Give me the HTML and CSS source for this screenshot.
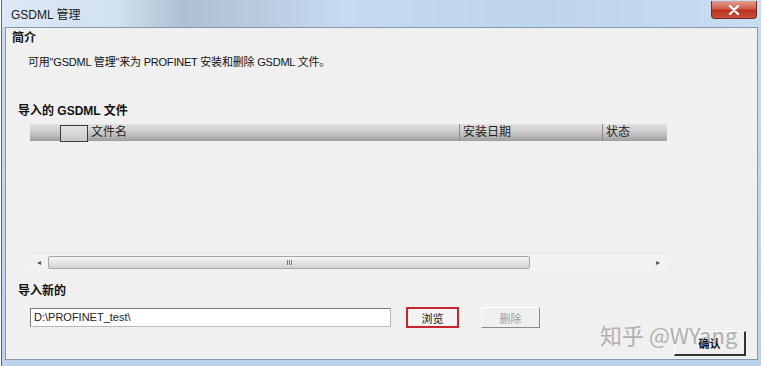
FILE: index.html
```html
<!DOCTYPE html>
<html lang="zh-CN">
<head>
  <meta charset="UTF-8">
  <title>GSDML 管理</title>
  <link rel="stylesheet" href="styles.css">
</head>
<body>
  <div class="window">
    <div class="titlebar">
      <span class="title">GSDML 管理</span>
      <div class="close">
        <svg width="14" height="10" viewBox="0 0 14 10">
          <path d="M3 1 L11 9 M11 1 L3 9" stroke="#fff" stroke-width="2.4" stroke-linecap="round"/>
        </svg>
      </div>
    </div>

    <div class="content">
      <div class="group-title">简介</div>
      <p class="intro">可用"GSDML 管理"来为 PROFINET 安装和删除 GSDML 文件。</p>

      <div class="section-title">导入的 GSDML 文件</div>
      <div class="list">
        <div class="list-header">
          <div class="hcell blank"></div>
          <div class="hcell check"><span class="box"></span></div>
          <div class="hcell name">文件名</div>
          <div class="hcell date">安装日期</div>
          <div class="hcell status">状态</div>
        </div>
        <div class="list-body"></div>
        <div class="hscroll">
          <span class="arrow">&#9666;</span>
          <div class="thumb">
            <span class="grip"></span><span class="grip"></span><span class="grip"></span>
          </div>
          <div class="track"></div>
          <span class="arrow">&#9656;</span>
        </div>
      </div>

      <div class="section-title new">导入新的</div>
      <div class="import-row">
        <div class="path-input">D:\PROFINET_test\</div>
        <div class="highlight"><button class="btn browse">浏览</button></div>
        <button class="btn disabled">删除</button>
      </div>

      <div class="footer">
        <button class="btn ok">确认</button>
      </div>
    </div>

    <div class="watermark">知乎 @WYang</div>
  </div>
</body>
</html>
```

FILE: styles.css
```css
body {
  margin: 0;
  background-color: #fff;
  font-family: "Liberation Sans", "Noto Sans CJK SC", sans-serif;
  font-size: 11px;
  color: #111;
}
.window {
  position: relative;
  width: 760px;
  height: 366px;
  margin-left: 1px;
  box-sizing: border-box;
  border-left: 1px solid #5a6878;
  padding: 0 3px 6px 3px;
  background: linear-gradient(180deg, #c9dcef 0%, #bcd3ea 100%);
}
.titlebar {
  height: 27px;
  display: flex;
  align-items: center;
  justify-content: space-between;
  margin: 0 -3px;
  padding: 0 4px 0 9px;
  background: linear-gradient(90deg, #dce8f4 0%, #d2e1f0 15%, #aebfd2 24%, #b8cadc 33%, #c6dbef 45%, #bcd4ec 70%, #c9ddf1 100%);
}
.title {
  font-size: 12px;
  color: #1a1a1a;
}
.close {
  align-self: flex-start;
  width: 44px;
  height: 17px;
  margin-top: 1px;
  display: flex;
  align-items: center;
  justify-content: center;
  border: 1px solid #6e2a22;
  border-top: none;
  border-radius: 0 0 4px 4px;
  background: linear-gradient(180deg, #e0a092 0%, #cf5c4a 45%, #b8321f 55%, #c8503c 100%);
}
.content {
  height: 333px;
  box-sizing: border-box;
  border: 1px solid #8497ad;
  background-color: #f0f0f0;
  padding: 3px 6px 0 6px;
}
.group-title, .section-title {
  font-size: 12px;
  font-weight: bold;
  line-height: 14px;
}
.intro {
  margin: 10px 0 0 16px;
  line-height: 14px;
  letter-spacing: -0.2px;
}
.section-title {
  margin: 35px 0 0 6px;
}
.list {
  margin: 6px 0 0 18px;
  width: 637px;
}
.list-header {
  display: flex;
  height: 17px;
  background: linear-gradient(180deg, #e2e2e2 0%, #cfcfcf 40%, #b4b4b4 75%, #9e9e9e 100%);
}
.hcell {
  box-sizing: border-box;
  height: 17px;
  line-height: 17px;
  padding-left: 3px;
  font-size: 12px;
  color: #222;
}
.blank { width: 30px; padding: 0; }
.check { width: 28px; padding: 1px 0 0 0; }
.check .box {
  display: block;
  width: 26px;
  height: 15px;
  border: 1px solid #3c3c3c;
  background: linear-gradient(180deg, #e4e4e4 0%, #c8c8c8 100%);
}
.name { width: 371px; }
.date { width: 143px; border-left: 1px solid #8a8a8a; }
.status { flex: 1; border-left: 1px solid #8a8a8a; }
.list-body {
  height: 112px;
}
.hscroll {
  display: flex;
  align-items: center;
  height: 16px;
  background-color: #f2f2f2;
  border-top: 1px solid #e6e6e6;
}
.arrow {
  width: 18px;
  text-align: center;
  font-size: 8px;
  color: #555;
}
.thumb {
  width: 482px;
  height: 13px;
  box-sizing: border-box;
  border: 1px solid #a8a8a8;
  border-radius: 2px;
  background: linear-gradient(180deg, #f6f6f6 0%, #e4e4e4 50%, #d2d2d2 100%);
  display: flex;
  align-items: center;
  justify-content: center;
  gap: 1px;
}
.grip {
  width: 1px;
  height: 5px;
  background-color: #777;
}
.track {
  flex: 1;
}
.section-title.new {
  margin-top: 14px;
}
.import-row {
  display: flex;
  align-items: center;
  margin: 9px 0 0 18px;
  height: 21px;
}
.path-input {
  width: 361px;
  height: 19px;
  box-sizing: border-box;
  border: 1px solid #b8b8b8;
  border-top-color: #7a7a7a;
  border-left-color: #7a7a7a;
  background-color: #fff;
  padding-left: 3px;
  line-height: 17px;
  color: #222;
}
.btn {
  font-family: "Liberation Sans", "Noto Sans CJK SC", sans-serif;
  font-size: 11px;
  padding: 0;
  box-sizing: border-box;
  background-color: #f0f0f0;
  border: 1px solid;
  border-color: #fff #555 #555 #fff;
  color: #111;
}
.highlight {
  margin-left: 15px;
  width: 53px;
  height: 21px;
  box-sizing: border-box;
  border: 2px solid #c8262e;
  padding: 1px;
  display: flex;
}
.browse {
  flex: 1;
  border: none;
  background-color: #f4f4f4;
}
.disabled {
  margin-left: 22px;
  width: 59px;
  height: 21px;
  color: #a0a0a0;
  border-color: #fff #8a8a8a #8a8a8a #fff;
}
.footer {
  display: flex;
  justify-content: flex-end;
  margin-top: 3px;
  padding-right: 5px;
}
.ok {
  width: 72px;
  height: 25px;
  border-width: 1px 2px 2px 1px;
  border-color: #fff #333 #333 #fff;
  font-weight: bold;
}
.watermark {
  position: absolute;
  left: 598px;
  top: 318px;
  font-family: "Noto Sans CJK SC", sans-serif;
  font-size: 22px;
  color: rgba(120, 120, 120, 0.55);
  white-space: nowrap;
}
```
